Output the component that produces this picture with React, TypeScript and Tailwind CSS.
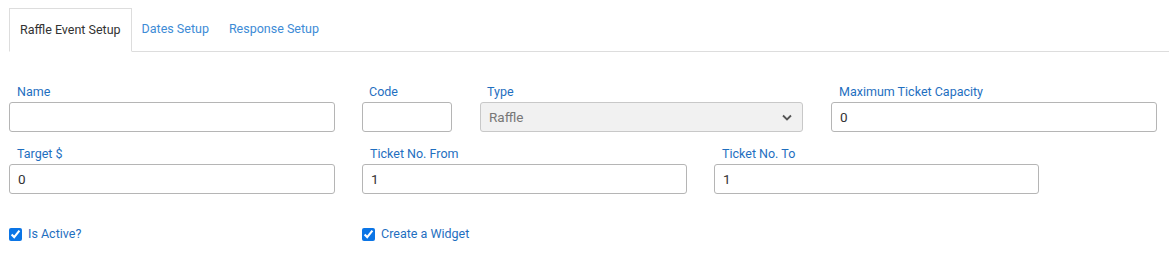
import React, { useState } from 'react';

const Field: React.FC<{ label: string; width: string; value?: string; labelPad?: string }> = ({ label, width, value = '', labelPad = 'pl-2' }) => (
    <div className={`${width} flex flex-col`}>
        <label className={`${labelPad} h-[20px] text-[12.5px] leading-[20px] text-[#1f6fbf]`}>{label}</label>
        <input
            type="text"
            defaultValue={value}
            className="h-[30px] w-full rounded-[3px] border border-[#b5b5b5] bg-white px-2 text-[13.5px] text-[#333] outline-none"
        />
    </div>
);

const Check: React.FC<{ label: string; width: string }> = ({ label, width }) => {
    const [checked, setChecked] = useState(true);
    return (
        <label className={`${width} flex items-center gap-[6px] text-[12.5px] text-[#1f6fbf]`}>
            <input
                type="checkbox"
                checked={checked}
                onChange={e => setChecked(e.target.checked)}
                className="m-0 h-[13px] w-[13px] accent-[#0b75e6]"
            />
            {label}
        </label>
    );
};

export default function App() {
    return (
        <div className="min-h-[262px] w-[1169px] bg-white font-['Roboto',sans-serif]">
            {/* tabs */}
            <div className="flex pt-[8px] pl-[9px]">
                <div className="flex flex-1 items-end border-b border-[#dddddd]">
                    <div className="-mb-px flex h-[44px] items-center border border-b-white border-[#dddddd] bg-white px-[10px] text-[12.5px] text-[#333]">
                        Raffle Event Setup
                    </div>
                    <div className="flex h-[43px] items-center pl-[10px] pr-[10px] text-[12.5px] text-[#3d8bd6]">Dates Setup</div>
                    <div className="flex h-[43px] items-center px-[10px] text-[12.5px] text-[#3d8bd6]">Response Setup</div>
                </div>
            </div>

            <div className="pl-[9px] pt-[30px]">
                <div className="flex">
                    <Field label="Name" width="w-[326px]" />
                    <div className="ml-[27px]">
                        <Field label="Code" width="w-[90px]" labelPad="pl-[7px]" />
                    </div>
                    <div className="ml-[28px] flex w-[323px] flex-col">
                        <label className="h-[20px] pl-[7px] text-[12.5px] leading-[20px] text-[#1f6fbf]">Type</label>
                        <div className="flex h-[30px] items-center justify-between rounded-[3px] border border-[#c8c8c8] bg-[#f1f1f1] px-2 text-[13.5px] text-[#777]">
                            <span>Raffle</span>
                            <svg width="10" height="7" viewBox="0 0 10 7" className="mr-[2px]">
                                <path d="M1 1.5 L5 5.5 L9 1.5" fill="none" stroke="#555" strokeWidth="1.8" />
                            </svg>
                        </div>
                    </div>
                    <div className="ml-[28px]">
                        <Field label="Maximum Ticket Capacity" width="w-[326px]" value="0" />
                    </div>
                </div>

                <div className="mt-[12px] flex gap-[27px]">
                    <Field label="Target $" width="w-[326px]" value="0" />
                    <Field label="Ticket No. From" width="w-[325px]" value="1" />
                    <Field label="Ticket No. To" width="w-[325px]" value="1" />
                </div>

                <div className="mt-[31px] flex gap-[27px]">
                    <Check label="Is Active?" width="w-[326px]" />
                    <Check label="Create a Widget" width="w-[200px]" />
                </div>
            </div>
        </div>
    );
}
